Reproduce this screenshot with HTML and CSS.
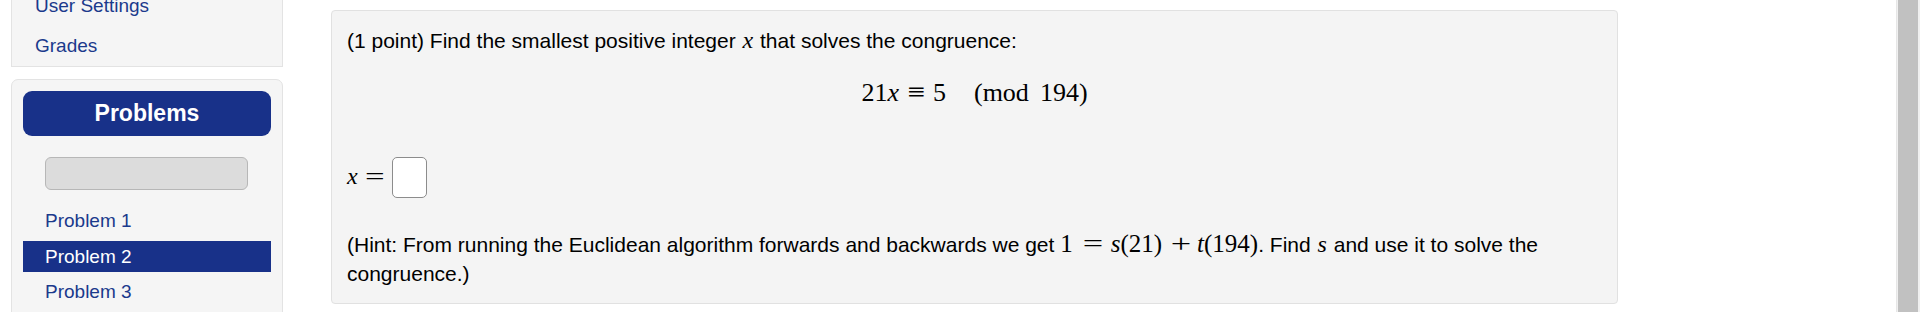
FILE: index.html
```html
<!DOCTYPE html>
<html lang="en">
<head>
<meta charset="utf-8">
<title>Problem 2</title>
<link rel="stylesheet" href="styles.css">
</head>
<body>
<div class="page">
  <aside class="sidebar">
    <nav class="panel panel-top">
      <a class="nav-item" href="#">User Settings</a>
      <a class="nav-item" href="#">Grades</a>
    </nav>
    <nav class="panel panel-problems">
      <div class="problems-head">Problems</div>
      <div class="pill"></div>
      <ul class="prob-list">
        <li><a class="prob" href="#">Problem 1</a></li>
        <li><a class="prob active" href="#">Problem 2</a></li>
        <li><a class="prob" href="#">Problem 3</a></li>
      </ul>
    </nav>
  </aside>
  <main class="problem">
    <p class="line">(1 point) Find the smallest positive integer <span class="mi tx">x</span> that solves the congruence:</p>
    <div class="display"><span class="math eq">21<span class="mi">x</span><span class="mo rel equiv"><span class="g">≡</span></span>5<span class="quad"></span>(mod<span class="sp"></span>194)</span></div>
    <div class="answer-row">
      <span class="math ans"><span class="mi">x</span><span class="mo rel eqs"><span class="g">=</span></span></span>
      <span class="ans-box"></span>
    </div>
    <p class="hint"><span>(Hint: From running the Euclidean algorithm forwards and backwards we get </span><span class="math im">1<span class="mo rel eqs"><span class="g">=</span></span><span class="mi">s</span>(21)<span class="mo bin"><span class="g">+</span></span><span class="mi">t</span>(194)</span><span>. Find </span><span class="mi tx">s</span><span> and use it to solve the </span><span class="wrap">congruence.)</span></p>
  </main>
</div>
<div class="scrollbar"><div class="thumb"></div></div>
</body>
</html>
```
FILE: styles.css
```css
html, body {
  margin: 0;
  padding: 0;
  background: #ffffff;
  overflow: hidden;
}
body {
  font-family: "Liberation Sans", Arial, sans-serif;
  color: #000;
  height: 312px;
}
.page {
  display: flex;
  align-items: flex-start;
}
.sidebar {
  width: 272px;
  margin-left: 11px;
  margin-top: -15px;
  display: flex;
  flex-direction: column;
  gap: 12px;
}
.panel {
  background: #f5f5f5;
  border: 1px solid #e3e3e3;
}
.panel-top {
  display: flex;
  flex-direction: column;
}
.nav-item {
  display: block;
  height: 40px;
  line-height: 40px;
  padding-left: 23px;
  font-size: 19px;
  color: #1b3a8c;
  text-decoration: none;
}
.panel-problems {
  border-radius: 7px;
  padding: 11px 11px 0;
  height: 260px;
}
.problems-head {
  height: 45px;
  line-height: 45px;
  background: #183189;
  border-radius: 9px;
  color: #fff;
  font-weight: bold;
  font-size: 23px;
  text-align: center;
}
.pill {
  margin: 21px 22px 0 22px;
  height: 31px;
  background: #dcdcdc;
  border: 1px solid #b7b7b7;
  border-radius: 6px;
  width: 201px;
}
.prob-list {
  list-style: none;
  margin: 15px 0 0;
  padding: 0;
  display: flex;
  flex-direction: column;
  gap: 4px;
}
.prob {
  display: block;
  height: 31.5px;
  line-height: 31px;
  padding-left: 22px;
  font-size: 19px;
  color: #1b3a8c;
  text-decoration: none;
}
.prob.active {
  background: #183189;
  color: #fff;
}
.problem {
  margin-left: 48px;
  margin-top: 10px;
  width: 1255px;
  height: 262px;
  padding: 15px;
  background: #f4f4f4;
  border: 1px solid #e1e1e1;
  border-radius: 4px;
  font-size: 21px;
  line-height: 29px;
  color: #000;
}
.line {
  margin: 0;
}
.math {
  font-family: "Liberation Serif", "Times New Roman", serif;
  white-space: nowrap;
}
.mi {
  font-family: "Liberation Serif", "Times New Roman", serif;
  font-style: italic;
}
.mi.tx {
  font-size: 24px;
  line-height: 20px;
  padding: 0 1px;
}
.mo {
  display: inline-block;
  text-align: center;
}
.mo .g {
  display: inline-block;
  transform: scaleX(1.45);
}
.display {
  margin-top: 23px;
  height: 30px;
  line-height: 30px;
  text-align: center;
}
.eq {
  font-size: 26px;
}
.eq .equiv {
  width: 16px;
  margin: 0 9px 0 9px;
}
.equiv .g {
  transform: scaleX(1.2) scaleY(1.05);
}
.quad {
  display: inline-block;
  width: 28px;
}
.sp {
  display: inline-block;
  width: 11px;
}
.answer-row {
  margin-top: 49px;
  height: 41px;
  display: flex;
  align-items: center;
}
.ans {
  font-size: 24px;
  line-height: 41px;
  padding-bottom: 3px;
}
.ans .eqs {
  width: 17px;
  margin: 0 8px 0 9px;
}
.ans-box {
  width: 33px;
  height: 39px;
  background: #fff;
  border: 1px solid #8c8c8c;
  border-radius: 5px;
}
.hint {
  margin: 32px 0 0;
}
.wrap {
  display: inline-block;
}
.im {
  font-size: 25px;
  line-height: 20px;
}
.im .eqs {
  width: 20px;
  margin: 0 8px 0 10px;
}
.im .bin {
  width: 19px;
  margin: 0 7px 0 9px;
}
.scrollbar {
  position: fixed;
  top: 0;
  right: 0;
  width: 24px;
  height: 312px;
  background: #f0f0f0;
  border-left: 1px solid #e6e6e6;
  box-sizing: border-box;
}
.thumb {
  margin: 0 2px 0 1px;
  height: 312px;
  background: #c1c1c1;
}
```
